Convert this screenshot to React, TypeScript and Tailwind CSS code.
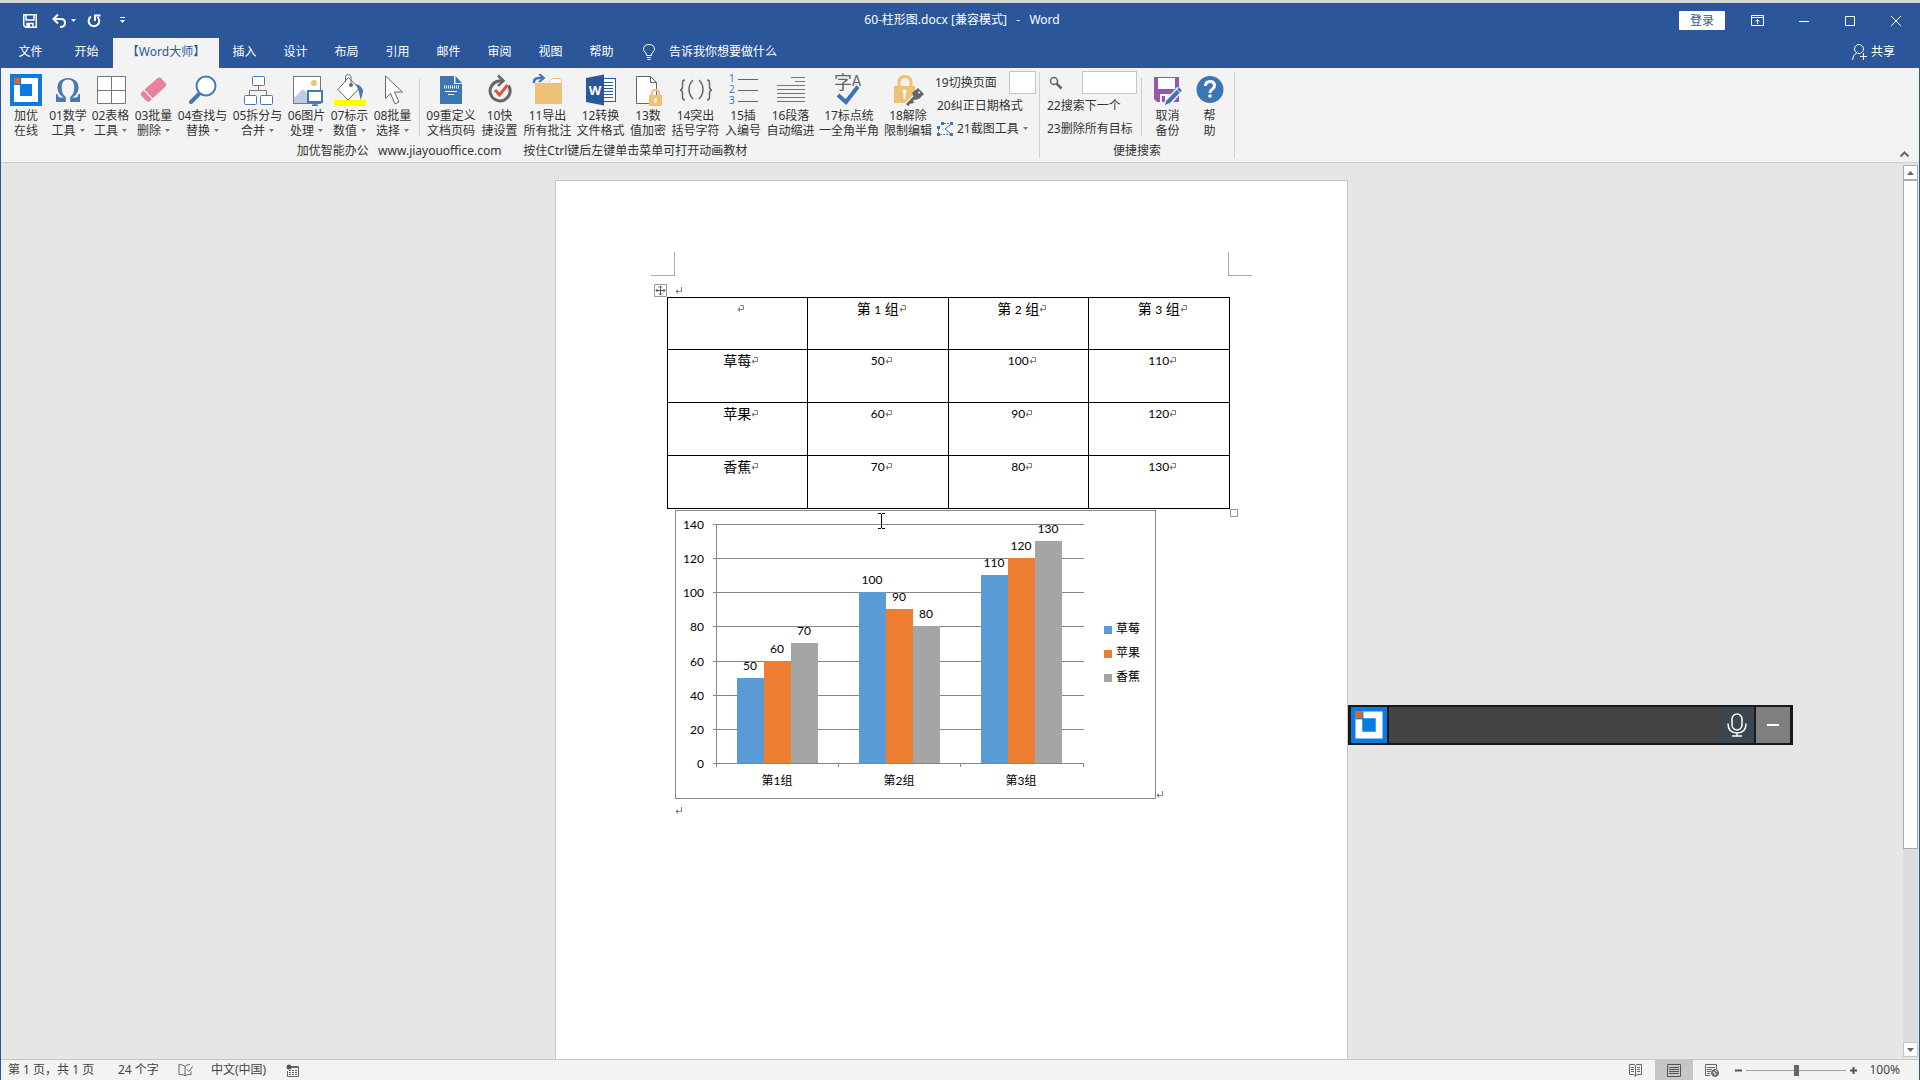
import type { ReactNode } from "react";

const DROP_COLOR = "#777";

// Icons
function LogoIcon({ size = 32 }: { size?: number }) {
  return (
    <svg width={size} height={size} viewBox="0 0 32 32">
      <rect width="32" height="32" fill="#0a7be0" />
      <path fill="#fff" fillRule="evenodd" d="M4 4h24v24H4zM10 10v12h12V10z" />
      <rect x="4" y="4" width="7" height="7" fill="#0a7be0" />
      <rect x="4" y="4" width="6" height="6" fill="#d8691f" />
    </svg>
  );
}

function OmegaIcon() {
  return (
    <svg width="32" height="32" viewBox="0 0 32 32">
      <path
        fill="#4579b4"
        d="M4 28V20h1.500c.4 2.800 1 3.600 3.500 3.600h3C8 21.500 5.500 18 5.500 13.500 5.500 7.500 10 4 16 4s10.500 3.500 10.500 9.500c0 4.500-2.500 8-6.500 10.100h3c2.500 0 3.100-.8 3.500-3.600H28v8H18.200v-5C21 21 22.300 18 22.300 13.500 22.300 8.500 20 5.600 16 5.600s-6.300 2.900-6.300 7.900c0 4.500 1.300 7.500 4.100 9.500v5z"
      />
    </svg>
  );
}

function GridIcon() {
  return (
    <svg width="32" height="32" viewBox="0 0 32 32">
      <path
        d="M2.500 2.500h28v27h-28zM16.500 2.500v27M2.500 16.500h28"
        fill="#fff"
        stroke="#777"
      />
    </svg>
  );
}

function EraserIcon() {
  return (
    <svg width="32" height="32" viewBox="0 0 32 32" fill="#e8829a">
      <path d="M19.500 4.200q2-1.600 3.600 0l4.600 5q1.400 1.600-.2 3.200L14.800 24.200 6.500 15.600z" />
      <path d="M5.600 16.500l8.300 8.700-2.200 2q-1.700 1.300-3.300-.2l-5-5.200q-1.300-1.600.1-3.300z" />
    </svg>
  );
}

function FindIcon() {
  return (
    <svg width="32" height="32" viewBox="0 0 32 32">
      <path d="M4 28L13 19" stroke="#4579b4" strokeWidth="4" strokeLinecap="round" />
      <circle cx="19" cy="12" r="9.500" fill="#fff" stroke="#4579b4" strokeWidth="2" />
    </svg>
  );
}

function SplitIcon() {
  return (
    <svg width="32" height="32" viewBox="0 0 32 32">
      <path d="M16.500 12v4.500M7.500 21v-4.500h17V21" fill="none" stroke="#777" />
      <g fill="#fff" stroke="#4579b4">
        <rect x="10.500" y="2.500" width="12" height="9" rx="1" />
        <rect x="2.500" y="21.500" width="12" height="9" rx="1" />
        <rect x="18.500" y="21.500" width="12" height="9" rx="1" />
      </g>
    </svg>
  );
}

function ImageIcon() {
  return (
    <svg width="32" height="32" viewBox="0 0 32 32">
      <rect x="2.500" y="2.500" width="27" height="27" fill="#fff" stroke="#777" />
      <circle cx="23" cy="9" r="3" fill="#eec47a" />
      <path d="M3 29V24l8-8q1-1 2 0l4 4v9z" fill="#b9cde5" />
      <rect x="17" y="17" width="14" height="11" fill="#fff" stroke="#4579b4" strokeWidth="2" />
      <path d="M24 28v3M21 31.500h6" stroke="#4579b4" strokeWidth="2" />
    </svg>
  );
}

function FillIcon() {
  return (
    <svg width="32" height="32" viewBox="0 0 32 32">
      <path d="M14.500 3.500L25 14.500 14 26 4 15.500z" fill="#fff" stroke="#666" />
      <path
        d="M11.500 8V3q0-2.500 2.500-2.500t3 2.500v7"
        fill="none"
        stroke="#777"
      />
      <circle cx="17" cy="11" r="2" fill="#666" />
      <path d="M22 10q6 1.500 7 7-.5 5-2.500 9-1-6-2-9.500z" fill="#4579b4" />
      <rect y="26" width="32" height="6" fill="#ff0" />
    </svg>
  );
}

function PointerIcon() {
  return (
    <svg width="32" height="32" viewBox="0 0 32 32">
      <path
        d="M8.500 2v22.500l5-5 4.500 10.500 4-2-4.500-10h8z"
        fill="#fff"
        stroke="#666"
      />
    </svg>
  );
}

function DocIcon() {
  return (
    <svg width="32" height="32" viewBox="0 0 32 32">
      <path d="M5 2h14v8h8v20H5z" fill="#3c75b3" />
      <path d="M20.500 2l6.500 7h-6.500z" fill="#3c75b3" />
      <path d="M9 13h15" stroke="#fff" strokeWidth="3" strokeDasharray="1 1" />
      <path d="M10 17.500h12M13 20.500h6" stroke="#fff" />
    </svg>
  );
}

function QuickIcon() {
  return (
    <svg width="32" height="32" viewBox="0 0 32 32" fill="none">
      <path d="M24.500 11.500A10 10 0 1 1 15 7h3" stroke="#666" strokeWidth="3" />
      <path d="M14 1.500l5.500 5.300-5.500 5" stroke="#666" strokeWidth="2.500" />
      <path d="M11 16l4.500 5 8-10" stroke="#e0563a" strokeWidth="3" />
    </svg>
  );
}

function ExportIcon() {
  return (
    <svg width="32" height="32" viewBox="0 0 32 32">
      <path d="M17 9q1-4.500 4-4.500h6q2.500 0 2.500 4.500" fill="#fff" stroke="#edc277" />
      <path d="M3 9h27v21H3z" fill="#edc277" />
      <path d="M2 9q-.5-5 5-5h3" fill="none" stroke="#3c75b3" strokeWidth="2.500" />
      <path d="M7 0l5 4-5 4" fill="none" stroke="#3c75b3" strokeWidth="2" />
    </svg>
  );
}

function WordIcon() {
  return (
    <svg width="32" height="32" viewBox="0 0 32 32">
      <rect x="18" y="4.500" width="12.500" height="23" fill="#fff" stroke="#2b579a" />
      <path
        d="M18 8.500h10M18 11.500h10M18 14.500h10M18 17.500h10M18 20.500h10M18 23.500h10"
        stroke="#2b579a"
      />
      <path d="M1 4l18-3.500v31L1 28z" fill="#2b579a" />
      <text
        x="10"
        y="21"
        textAnchor="middle"
        fill="#fff"
        className="font-['Open_Sans',sans-serif] text-[13px] font-bold"
      >
        W
      </text>
    </svg>
  );
}

function EncryptIcon() {
  return (
    <svg width="32" height="32" viewBox="0 0 32 32">
      <path d="M4.500 2.500h14l6 6v21h-20z" fill="#fff" stroke="#666" />
      <path d="M18.500 2.500v6h6" fill="none" stroke="#666" />
      <path d="M20 22v-3q0-3 3.500-3t3.500 3v3" fill="none" stroke="#edc277" strokeWidth="2" />
      <rect x="17" y="21" width="13" height="11" fill="#edc277" />
      <path d="M23.500 24v5" stroke="#fff" strokeWidth="2" />
    </svg>
  );
}

function BracketIcon() {
  return (
    <svg width="32" height="32" viewBox="0 0 32 32" fill="none" stroke="#666">
      <path
        strokeWidth="1.500"
        d="M5 6Q2.500 6 2.500 9v4q0 2.500-2.500 3 2.500.5 2.500 3v4q0 3 2.500 3M27 6q2.500 0 2.500 3v4q0 2.500 2.500 3-2.500.5-2.500 3v4q0 3-2.500 3M13 6Q9 10 9 15.500T13 25M19 6q4 4 4 9.500T19 25"
      />
    </svg>
  );
}

function NumberingIcon() {
  return (
    <svg width="32" height="32" viewBox="0 0 32 32" className="overflow-visible">
      <path d="M11 5.500h20M11 16.500h20M11 27.500h20" stroke="#666" />
      <g fill="#4579b4" className="font-['Noto_Sans',sans-serif] text-[10px]">
        <text x="2" y="8">1</text>
        <text x="2" y="19">2</text>
        <text x="2" y="30">3</text>
      </g>
    </svg>
  );
}

function IndentIcon() {
  return (
    <svg width="32" height="32" viewBox="0 0 32 32">
      <path
        d="M16 3.500h14M20 7.500h10M2 11.500h28M2 15.500h28M2 19.500h28M2 23.500h28M2 27.500h28"
        stroke="#777"
      />
    </svg>
  );
}

function PunctuationIcon() {
  return (
    <svg width="32" height="32" viewBox="0 0 32 32" className="overflow-visible">
      <g fill="#666" className="font-['Noto_Sans_CJK_SC',sans-serif]">
        <text x="1" y="15" className="text-[18px]">字</text>
        <text x="19" y="12" className="text-[15px]">A</text>
      </g>
      <path d="M5 21l8 7L25 12.500" fill="none" stroke="#3c75b3" strokeWidth="4" />
    </svg>
  );
}

function UnlockIcon() {
  return (
    <svg width="32" height="32" viewBox="0 0 32 32">
      <path d="M7 13V9q0-6.500 6-6.500T19 9v4" fill="none" stroke="#edc277" strokeWidth="3" />
      <rect x="2" y="12" width="21" height="17" fill="#edc277" />
      <circle cx="12.500" cy="17.500" r="2" fill="#fff" />
      <path d="M12.500 18v7" stroke="#fff" strokeWidth="2" />
      <path d="M15 31l9-9" stroke="#f3f3f3" strokeWidth="6" />
      <path d="M15 31l9-9M19 27l2 2" stroke="#666" strokeWidth="3" />
      <path d="M20 19l6-5 6 6-5 5-4 1z" fill="#666" />
      <circle cx="27" cy="18.500" r="1" fill="#fff" />
    </svg>
  );
}

function CaptureIcon() {
  return (
    <svg width="16" height="14" viewBox="0 0 16 14">
      <path d="M3 12.500h10M1.500 4v7M7 1.500h6" stroke="#777" strokeDasharray="2 1" />
      <path d="M13 3L8 7l5 4" fill="none" stroke="#3c75b3" />
      <g fill="#3c75b3">
        <path d="M4 0h3v3H4zM13 0h3v3h-3zM0 4h3v3H0zM0 11h3v3H0zM13 11h3v3h-3z" />
      </g>
    </svg>
  );
}

function SmallFindIcon() {
  return (
    <svg width="14" height="14" viewBox="0 0 14 14" fill="none" stroke="#666">
      <circle cx="5" cy="5" r="3.500" strokeWidth="1.500" />
      <path d="M7.500 7.500l5 5" strokeWidth="2.500" />
    </svg>
  );
}

function CancelBackupIcon() {
  return (
    <svg width="32" height="32" viewBox="0 0 32 32">
      <path d="M2 3h25v25H5l-3-3z" fill="#9457b5" />
      <path d="M6 4h17v11H6zM8 20h12v8H8z" fill="#fff" />
      <rect x="10" y="22" width="3" height="6" fill="#9457b5" />
      <path d="M15 30l13-15" stroke="#f3f3f3" strokeWidth="7" />
      <path d="M16 28l12.500-13" stroke="#3c75b3" strokeWidth="4" />
      <path d="M13 31l1.500-5 3 3z" fill="#3c75b3" />
      <path d="M25 15.500l3.500 3.500" stroke="#fff" />
    </svg>
  );
}

function HelpIcon() {
  return (
    <svg width="32" height="32" viewBox="0 0 32 32" fill="none">
      <circle cx="16" cy="15.500" r="13.500" fill="#3c75b3" />
      <path d="M11.500 12q0-4.500 4.500-4.500t4.500 4q0 2-2 3.500-2.500 1.700-2.500 4" stroke="#fff" strokeWidth="3" />
      <path d="M16 20.500v3" stroke="#fff" strokeWidth="3" />
    </svg>
  );
}

function DropArrow({ color = DROP_COLOR }: { color?: string }) {
  return (
    <svg width="5" height="3" viewBox="0 0 5 3" className="inline-block shrink-0">
      <path d="M0 0h5L2.500 3z" fill={color} />
    </svg>
  );
}

// Paragraph mark, hangs outside the centred text when inside a cell
function ReturnMark({ cell = false }: { cell?: boolean }) {
  return (
    <svg
      width="7"
      height="8"
      viewBox="0 0 7 8"
      className={cell ? "shrink-0 -mr-[7px]" : "shrink-0"}
      fill="none"
      stroke="#808080"
    >
      <path d={cell ? "M3 .5h3.500v4H1" : "M6.500 0v4.500H1"} />
      <path d="M3 2v5L.5 4.500z" fill="#808080" stroke="none" />
    </svg>
  );
}

// Ribbon data
type Tool = {
  icon: ReactNode;
  lines: [string, string];
  width: string;
  drop?: boolean;
};

const toolsLeft: Tool[] = [
  { icon: <LogoIcon />, lines: ["加优", "在线"], width: "w-[42px]" },
  { icon: <OmegaIcon />, lines: ["01数学", "工具"], width: "w-[42px]", drop: true },
  { icon: <GridIcon />, lines: ["02表格", "工具"], width: "w-[43px]", drop: true },
  { icon: <EraserIcon />, lines: ["03批量", "删除"], width: "w-[43px]", drop: true },
  { icon: <FindIcon />, lines: ["04查找与", "替换"], width: "w-[55px]", drop: true },
  { icon: <SplitIcon />, lines: ["05拆分与", "合并"], width: "w-[55px]", drop: true },
  { icon: <ImageIcon />, lines: ["06图片", "处理"], width: "w-[43px]", drop: true },
  { icon: <FillIcon />, lines: ["07标示", "数值"], width: "w-[43px]", drop: true },
  { icon: <PointerIcon />, lines: ["08批量", "选择"], width: "w-[43px]", drop: true },
];

const toolsRight: Tool[] = [
  { icon: <DocIcon />, lines: ["09重定义", "文档页码"], width: "w-[54px]" },
  { icon: <QuickIcon />, lines: ["10快", "捷设置"], width: "w-[43px]" },
  { icon: <ExportIcon />, lines: ["11导出", "所有批注"], width: "w-[53px]" },
  { icon: <WordIcon />, lines: ["12转换", "文件格式"], width: "w-[53px]" },
  { icon: <EncryptIcon />, lines: ["13数", "值加密"], width: "w-[42px]" },
  { icon: <BracketIcon />, lines: ["14突出", "括号字符"], width: "w-[53px]" },
  { icon: <NumberingIcon />, lines: ["15插", "入编号"], width: "w-[42px]" },
  { icon: <IndentIcon />, lines: ["16段落", "自动缩进"], width: "w-[53px]" },
  { icon: <PunctuationIcon />, lines: ["17标点统", "一全角半角"], width: "w-[64px]" },
  { icon: <UnlockIcon />, lines: ["18解除", "限制编辑"], width: "w-[54px]" },
];

const tabs = ["插入", "设计", "布局", "引用", "邮件", "审阅", "视图", "帮助"];

function ToolButton({ icon, lines, width, drop }: Tool) {
  return (
    <button
      type="button"
      className={`${width} flex flex-col items-center shrink-0 whitespace-nowrap leading-[15px]`}
    >
      <span className="h-[34px] block">{icon}</span>
      <span>{lines[0]}</span>
      <span className="flex items-center gap-1">
        {lines[1]}
        {drop && <DropArrow />}
      </span>
    </button>
  );
}

function TitleBar() {
  return (
    <header className="flex items-center h-[35px] pl-[22px] pr-[18px] text-white">
      <div className="flex-1 flex items-center">
        <button type="button" aria-label="保存">
          <svg width="14" height="14" viewBox="0 0 14 14" fill="none" stroke="#fff">
            <path d="M.75.75h12.500v12.500H2.500L.75 11.500z" strokeWidth="1.500" />
            <path d="M3 1v5h8V1M4 13V9.500h6V13" strokeWidth="1.500" />
            <path d="M4 9h3v4H4z" fill="#fff" stroke="none" />
          </svg>
        </button>
        <button type="button" aria-label="撤消" className="ml-[15px] flex items-center gap-[5px]">
          <svg width="14" height="14" viewBox="0 0 14 14" fill="none" stroke="#fff">
            <path d="M1 5h8q4 0 4 4t-5 4" strokeWidth="2" />
            <path d="M6 .5L1.500 5 6 9.500" strokeWidth="2" />
          </svg>
          <DropArrow color="#fff" />
        </button>
        <button type="button" aria-label="重复" className="ml-[11px]">
          <svg width="14" height="14" viewBox="0 0 14 14" fill="none" stroke="#fff">
            <path d="M4 2.500A5.300 5.300 0 1 0 10.500 3" strokeWidth="2" />
            <path d="M8 7V1.500h5.500" strokeWidth="2" />
          </svg>
        </button>
        <button type="button" aria-label="自定义快速访问工具栏" className="ml-[19px]">
          <svg width="5" height="7" viewBox="0 0 5 7" fill="#fff">
            <path d="M0 0h5v1H0zM0 3h5L2.500 6z" />
          </svg>
        </button>
      </div>
      <h1 className="whitespace-pre pb-[2px]">60-柱形图.docx [兼容模式]   -   Word</h1>
      <div className="flex-1 flex items-center justify-end">
        <button type="button" className="bg-white text-[#2b579a] w-[46px] h-[19px] leading-[19px] rounded-[1px]">
          登录
        </button>
        <button type="button" aria-label="功能区显示选项" className="ml-[26px]">
          <svg width="13" height="11" viewBox="0 0 13 11" fill="none" stroke="#fff">
            <path d="M.5.5h12v10H.5zM.5 2.500h12M6.500 9V4.500M4.500 6.500l2-2 2 2" />
          </svg>
        </button>
        <button type="button" aria-label="最小化" className="ml-[35px]">
          <svg width="10" height="10" viewBox="0 0 10 10" stroke="#fff">
            <path d="M0 5.500h10" />
          </svg>
        </button>
        <button type="button" aria-label="最大化" className="ml-9">
          <svg width="10" height="10" viewBox="0 0 10 10" fill="none" stroke="#fff">
            <path d="M.5.5h9v9h-9z" />
          </svg>
        </button>
        <button type="button" aria-label="关闭" className="ml-9">
          <svg width="10" height="10" viewBox="0 0 10 10" stroke="#fff">
            <path d="M0 0l10 10M10 0L0 10" />
          </svg>
        </button>
      </div>
    </header>
  );
}

function TabRow() {
  return (
    <nav className="flex h-[30px] text-white [&>button]:pb-[2px]">
      <button type="button" className="w-[59px]">文件</button>
      <button type="button" className="w-[53px]">开始</button>
      <button type="button" className="w-[106px] bg-[#f3f3f3] text-[#2b579a] whitespace-nowrap">
        【Word大师】
      </button>
      {tabs.map((tab) => (
        <button key={tab} type="button" className="w-[51px]">
          {tab}
        </button>
      ))}
      <button type="button" className="flex items-center gap-[14px] pl-4">
        <svg width="12" height="16" viewBox="0 0 12 16" fill="none" stroke="#fff">
          <path d="M3.500 11.500q0-2-1.500-3.500Q.5 6.500.5 5.500.5.500 6 .5t5.500 5q0 1-1.500 2.500t-1.500 3.500zM4 13.500h4M4.500 15.500h3" />
        </svg>
        告诉我你想要做什么
      </button>
      <button type="button" className="ml-auto mr-6 flex items-center gap-1">
        <svg width="15" height="16" viewBox="0 0 15 16" fill="none" stroke="#fff">
          <circle cx="7" cy="5" r="4.500" />
          <path d="M.5 16q0-5 4-7M8 12.500h7M11.500 9v7" />
        </svg>
        共享
      </button>
    </nav>
  );
}

function Ribbon() {
  return (
    <section className="flex h-[95px] bg-[#f3f3f3] border-b border-[#cdcdcd] text-[#333]">
      {/* Main tools */}
      <div className="flex flex-col pl-1 border-r border-[#d0d0d0] my-1">
        <div className="flex h-[69px] pt-[2px]">
          {toolsLeft.map((tool) => (
            <ToolButton key={tool.lines[0]} {...tool} />
          ))}
          <div className="w-px ml-[5px] mr-1 my-1 bg-[#d0d0d0]" />
          {toolsRight.map((tool) => (
            <ToolButton key={tool.lines[0]} {...tool} />
          ))}
          <div className="flex flex-col w-[104px] whitespace-nowrap leading-[23px]">
            <label className="flex items-center gap-3 -mt-[3px]">
              19切换页面
              <input type="text" className="w-[27px] h-[23px] bg-white border border-[#c6c6c6]" />
            </label>
            <button type="button" className="text-left pl-[2px]">20纠正日期格式</button>
            <button type="button" className="flex items-center gap-1 pl-[2px]">
              <CaptureIcon />
              21截图工具
              <DropArrow />
            </button>
          </div>
        </div>
        <p className="text-center leading-4 whitespace-pre pt-[3px]">
          加优智能办公{"   "}<a href="#site">www.jiayouoffice.com</a>
          {"       "}按住Ctrl键后左键单击菜单可打开动画教材
        </p>
      </div>

      {/* Quick search */}
      <div className="flex flex-col border-r border-[#d0d0d0] my-1 w-[195px]">
        <div className="flex h-[69px] pt-[2px]">
          <div className="flex flex-col pl-[7px] w-[101px] whitespace-nowrap leading-[23px]">
            <label className="flex items-center justify-between -mt-[3px] pl-[2px] pr-1">
              <SmallFindIcon />
              <input
                type="text"
                aria-label="查找内容"
                className="w-[55px] h-[23px] bg-white border border-[#c6c6c6]"
              />
            </label>
            <button type="button" className="text-left">22搜索下一个</button>
            <button type="button" className="text-left">23删除所有目标</button>
          </div>
          <div className="w-px my-1 mr-1 bg-[#d0d0d0]" />
          <ToolButton icon={<CancelBackupIcon />} lines={["取消", "备份"]} width="w-[43px]" />
          <ToolButton icon={<HelpIcon />} lines={["帮", "助"]} width="w-[41px]" />
        </div>
        <p className="text-center leading-4 pt-[3px]">便捷搜索</p>
      </div>

      <button type="button" aria-label="折叠功能区" className="ml-auto self-end mr-[10px] mb-[5px]">
        <svg width="9" height="6" viewBox="0 0 9 6" fill="none" stroke="#666" strokeWidth="2">
          <path d="M.5 5.500l4-4 4 4" />
        </svg>
      </button>
    </section>
  );
}

// Document data
const groups = ["1", "2", "3"];
const series = [
  { name: "草莓", color: "#5b9bd5", values: [50, 100, 110] },
  { name: "苹果", color: "#ed7d31", values: [60, 90, 120] },
  { name: "香蕉", color: "#a5a5a5", values: [70, 80, 130] },
];

function DataTable() {
  return (
    <table className="w-[563px] table-fixed border-collapse bg-white text-sm leading-[22px] [&_td]:border [&_th]:border [&_td]:border-black [&_th]:border-black [&_td]:p-0 [&_th]:p-0 [&_td]:align-top [&_th]:align-top [&_th]:font-normal">
      <thead>
        <tr className="h-[52px]">
          <th>
            <span className="flex h-[22px] items-center justify-center">
              <ReturnMark cell />
            </span>
          </th>
          {groups.map((group) => (
            <th key={group}>
              <span className="flex h-[22px] items-center justify-center">
                <span>
                  第 <span className="font-[Lato,sans-serif] text-xs">{group}</span> 组
                </span>
                <ReturnMark cell />
              </span>
            </th>
          ))}
        </tr>
      </thead>
      <tbody>
        {series.map((row) => (
          <tr key={row.name} className="h-[53px]">
            <th>
              <span className="flex h-[22px] items-center justify-center">
                {row.name}
                <ReturnMark cell />
              </span>
            </th>
            {row.values.map((value) => (
              <td key={value}>
                <span className="flex h-[22px] items-center justify-center font-[Lato,sans-serif] text-xs">
                  {value}
                  <ReturnMark cell />
                </span>
              </td>
            ))}
          </tr>
        ))}
      </tbody>
    </table>
  );
}

function BarChart() {
  const base = 253;
  const scale = 239 / 140;
  const ticks = [0, 20, 40, 60, 80, 100, 120, 140];

  return (
    <svg
      width="481"
      height="289"
      viewBox="0 0 481 289"
      className="shrink-0 font-[Lato,'Noto_Sans_CJK_SC',sans-serif] text-xs"
    >
      <rect x=".5" y=".5" width="480" height="288" fill="#fff" stroke="#868686" />
      {ticks.map((tick) => {
        const y = Math.round(base - tick * scale);
        return (
          <g key={tick}>
            <path d={`M38 ${y + 0.5}H409`} stroke="#868686" />
            <text x="29" y={y + 5} textAnchor="end">
              {tick}
            </text>
          </g>
        );
      })}
      <path d="M41.500 14v243M163.500 253v4M285.500 253v4M408.500 253v4" stroke="#868686" />
      {series.map((row, s) =>
        row.values.map((value, g) => {
          const x = 62 + g * 122 + s * 27;
          const height = Math.round(value * scale);
          return (
            <g key={value}>
              <rect x={x} y={base - height} width="27" height={height} fill={row.color} />
              <text x={x + 13} y={base - height - 8} textAnchor="middle">
                {value}
              </text>
            </g>
          );
        })
      )}
      {groups.map((group, g) => (
        <text key={group} x={102 + g * 122} y="275" textAnchor="middle">
          第{group}组
        </text>
      ))}
      {series.map((row, s) => (
        <g key={row.name}>
          <rect x="429" y={116 + s * 24} width="8" height="8" fill={row.color} />
          <text x="441" y={123 + s * 24}>
            {row.name}
          </text>
        </g>
      ))}
    </svg>
  );
}

function DocumentPage() {
  return (
    <article className="w-[793px] shrink-0 bg-white border border-[#c6c6c6] border-b-0 px-[95px] pt-[71px] text-black">
      {/* Margin corners */}
      <div className="flex justify-between">
        <div className="size-6 border-r border-b border-[#ababab]" />
        <div className="size-6 border-l border-b border-[#ababab]" />
      </div>

      <div className="pl-[3px] pt-2 flex items-center gap-2 h-[21px]">
        <svg width="13" height="13" viewBox="0 0 13 13" fill="none" stroke="#555">
          <path d="M.5.5h12v12H.5z" stroke="#999" />
          <path d="M6.500 2v9M2 6.500h9" />
          <path d="M5 3.500l1.500-1.500L8 3.500M5 9.500L6.500 11 8 9.500M3.500 5L2 6.500 3.500 8M9.500 5L11 6.500 9.500 8" />
        </svg>
        <ReturnMark />
      </div>

      <div className="pl-4 flex items-end">
        <DataTable />
        <div className="size-2 shrink-0 border border-[#999] -mb-2" />
      </div>

      <div className="pl-6 pt-px flex items-end relative">
        <BarChart />
        <ReturnMark />
        {/* Text cursor */}
        <svg
          width="9"
          height="16"
          viewBox="0 0 9 16"
          fill="none"
          stroke="#000"
          className="absolute left-[226px] top-1"
        >
          <path d="M1 .5h3M5 .5h3M4.500 1v14M1 15.500h3M5 15.500h3" />
        </svg>
      </div>
      <div className="pl-6 pt-2">
        <ReturnMark />
      </div>
    </article>
  );
}

function ScrollBar() {
  return (
    <div className="w-[15px] mr-px my-[2px] flex flex-col bg-[#dcdcdc] shrink-0">
      <button
        type="button"
        aria-label="向上滚动"
        className="h-[15px] border border-[#ababab] bg-white flex items-center justify-center"
      >
        <svg width="7" height="4" viewBox="0 0 7 4">
          <path d="M0 4h7L3.500 0z" fill="#666" />
        </svg>
      </button>
      <div className="basis-3/4 border border-[#ababab] bg-white" />
      <button
        type="button"
        aria-label="向下滚动"
        className="mt-auto h-[15px] border border-[#c6c6c6] bg-white flex items-center justify-center"
      >
        <svg width="7" height="4" viewBox="0 0 7 4">
          <path d="M0 0h7L3.500 4z" fill="#666" />
        </svg>
      </button>
    </div>
  );
}

function VoiceBar() {
  return (
    <div className="absolute left-[1348px] top-[702px] w-[445px] h-10 flex items-stretch gap-[2px] bg-[#161a1a] py-[2px] px-[3px]">
      <button type="button" aria-label="加优">
        <LogoIcon size={36} />
      </button>
      <div className="flex-1 flex bg-[#444]">
        <button
          type="button"
          aria-label="语音"
          className="ml-auto w-[34px] bg-[#3b4650] flex items-center justify-center"
        >
          <svg width="20" height="24" viewBox="0 0 20 24" fill="none" stroke="#fff" strokeWidth="1.500">
            <rect x="5" y="1" width="10" height="16" rx="5" />
            <path d="M1 10.500q0 9.500 9 9.500t9-9.500M10 20v3M5 23h10" />
          </svg>
        </button>
      </div>
      <button type="button" aria-label="收起" className="w-[34px] bg-[#7f7f7f] flex items-center justify-center">
        <span className="w-3 h-[2px] bg-white" />
      </button>
    </div>
  );
}

function StatusBar() {
  return (
    <footer className="flex items-center h-[21px] shrink-0 bg-[#f3f3f3] border-t border-[#c6c6c6] pl-[7px] pr-[19px] text-[#444] whitespace-nowrap">
      <span className="w-[110px]">第 1 页，共 1 页</span>
      <span className="w-[60px]">24 个字</span>
      <button type="button" aria-label="校对" className="w-[33px]">
        <svg width="15" height="12" viewBox="0 0 15 12" fill="none" stroke="#666">
          <path d="M7 2.500Q5.500.5 1 .5v10q4.500 0 6 1zM7 2.500Q8.500.5 12 .5M7 11.500q2-1 6-1v-3M9 5.500l2 2 3.500-5" />
        </svg>
      </button>
      <span className="w-[75px]">中文(中国)</span>
      <button type="button" aria-label="宏">
        <svg width="13" height="13" viewBox="0 0 13 13">
          <path d="M5 2.500h7.500v10H1.500V7" fill="none" stroke="#666" />
          <path d="M5 3.500h7" stroke="#666" />
          <path d="M3 6.500h8M3 8.500h8M3 10.500h8" stroke="#666" strokeDasharray="2 1" />
          <circle cx="3" cy="3" r="2.500" fill="#555" />
        </svg>
      </button>

      <div className="ml-auto flex items-center h-full">
        <button type="button" aria-label="阅读视图" className="mr-[13px]">
          <svg width="13" height="13" viewBox="0 0 13 13" fill="none" stroke="#666">
            <path d="M6.500 1.500v11M6.500 1.500L5 .5H.5v10H5l1.500 1.500L8 10.500h4.500V.5H8zM2 3.500h3M2 5.500h3M2 7.500h3M8 3.500h3M8 5.500h3M8 7.500h3" />
          </svg>
        </button>
        <button
          type="button"
          aria-label="页面视图"
          className="w-[38px] h-full bg-[#c6c6c6] flex items-center justify-center"
        >
          <svg width="14" height="13" viewBox="0 0 14 13" fill="none" stroke="#555">
            <path d="M.5.5h13v12H.5zM2 3.500h10M2 5.500h10M2 7.500h10M2 9.500h10" />
          </svg>
        </button>
        <button type="button" aria-label="Web 版式视图" className="ml-3">
          <svg width="14" height="13" viewBox="0 0 14 13" fill="none" stroke="#666">
            <path d="M5 11.500H.5V.5h11V5M2 3.500h8M2 5.500h5M2 7.500h4M2 9.500h3" />
            <circle cx="10" cy="9" r="3.500" fill="#777" />
            <path d="M8 8l2 1v2M10 6l2 2" stroke="#f3f3f3" />
          </svg>
        </button>
        <button type="button" aria-label="缩小" className="ml-4">
          <svg width="7" height="7" viewBox="0 0 7 7" stroke="#555" strokeWidth="2">
            <path d="M0 3.500h7" />
          </svg>
        </button>
        <input
          type="range"
          aria-label="显示比例"
          min="0"
          max="200"
          defaultValue="100"
          className="w-[100px] h-3 mx-1 appearance-none bg-transparent [&::-webkit-slider-runnable-track]:h-px [&::-webkit-slider-runnable-track]:bg-[#a0a0a0] [&::-webkit-slider-thumb]:appearance-none [&::-webkit-slider-thumb]:w-[5px] [&::-webkit-slider-thumb]:h-[11px] [&::-webkit-slider-thumb]:-mt-[5px] [&::-webkit-slider-thumb]:bg-[#666]"
        />
        <button type="button" aria-label="放大">
          <svg width="7" height="7" viewBox="0 0 7 7" stroke="#555" strokeWidth="2">
            <path d="M0 3.500h7M3.500 0v7" />
          </svg>
        </button>
        <span className="ml-3">100%</span>
      </div>
    </footer>
  );
}

export default function App() {
  return (
    <div className="relative flex flex-col h-screen overflow-hidden border-t-[3px] border-t-[#d5d7da] bg-[#2b579a] px-px font-['Noto_Sans','Noto_Sans_CJK_SC',sans-serif] text-xs">
      <TitleBar />
      <TabRow />
      <Ribbon />
      <main className="flex flex-1 min-h-0 bg-[#e6e6e6]">
        <div className="flex-1 flex justify-center pt-[17px] pr-[2px] overflow-hidden">
          <DocumentPage />
        </div>
        <ScrollBar />
      </main>
      <StatusBar />
      <VoiceBar />
    </div>
  );
}
